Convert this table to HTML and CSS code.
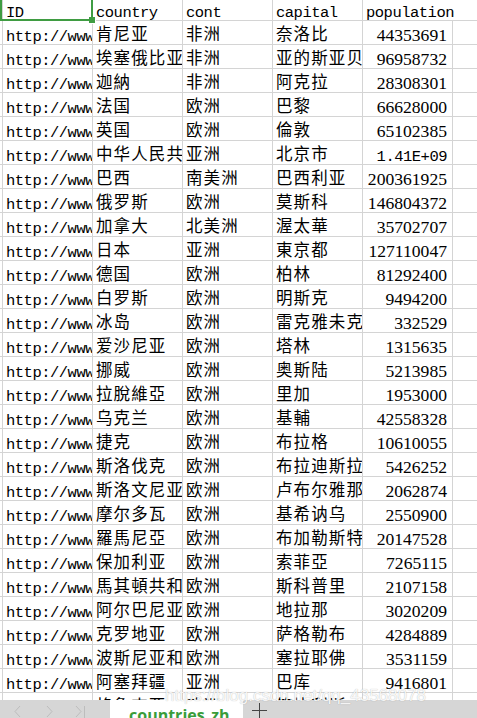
FILE: index.html
```html
<!DOCTYPE html>
<html lang="zh">
<head>
<meta charset="utf-8">
<title>countries_zh</title>
<link rel="stylesheet" href="styles.css">
</head>
<body>
<div class="app">
  <div class="sheet">
    <div class="row head">
      <div class="cell edge"></div>
      <div class="cell l sel">ID<span class="selbox"></span><span class="handle"></span></div>
      <div class="cell l">country</div>
      <div class="cell l">cont</div>
      <div class="cell l">capital</div>
      <div class="cell l spill">population</div>
      <div class="cell last"></div>
    </div>
    <div class="row"><div class="cell edge"></div><div class="cell l">http://www</div><div class="cell c">肯尼亚</div><div class="cell c">非洲</div><div class="cell c">奈洛比</div><div class="cell n">44353691</div><div class="cell last"></div></div>
    <div class="row"><div class="cell edge"></div><div class="cell l">http://www</div><div class="cell c">埃塞俄比亚</div><div class="cell c">非洲</div><div class="cell c">亚的斯亚贝巴</div><div class="cell n">96958732</div><div class="cell last"></div></div>
    <div class="row"><div class="cell edge"></div><div class="cell l">http://www</div><div class="cell c">迦納</div><div class="cell c">非洲</div><div class="cell c">阿克拉</div><div class="cell n">28308301</div><div class="cell last"></div></div>
    <div class="row"><div class="cell edge"></div><div class="cell l">http://www</div><div class="cell c">法国</div><div class="cell c">欧洲</div><div class="cell c">巴黎</div><div class="cell n">66628000</div><div class="cell last"></div></div>
    <div class="row"><div class="cell edge"></div><div class="cell l">http://www</div><div class="cell c">英国</div><div class="cell c">欧洲</div><div class="cell c">倫敦</div><div class="cell n">65102385</div><div class="cell last"></div></div>
    <div class="row"><div class="cell edge"></div><div class="cell l">http://www</div><div class="cell c">中华人民共和国</div><div class="cell c">亚洲</div><div class="cell c">北京市</div><div class="cell n m">1.41E+09</div><div class="cell last"></div></div>
    <div class="row"><div class="cell edge"></div><div class="cell l">http://www</div><div class="cell c">巴西</div><div class="cell c">南美洲</div><div class="cell c">巴西利亚</div><div class="cell n">200361925</div><div class="cell last"></div></div>
    <div class="row"><div class="cell edge"></div><div class="cell l">http://www</div><div class="cell c">俄罗斯</div><div class="cell c">欧洲</div><div class="cell c">莫斯科</div><div class="cell n">146804372</div><div class="cell last"></div></div>
    <div class="row"><div class="cell edge"></div><div class="cell l">http://www</div><div class="cell c">加拿大</div><div class="cell c">北美洲</div><div class="cell c">渥太華</div><div class="cell n">35702707</div><div class="cell last"></div></div>
    <div class="row"><div class="cell edge"></div><div class="cell l">http://www</div><div class="cell c">日本</div><div class="cell c">亚洲</div><div class="cell c">東京都</div><div class="cell n">127110047</div><div class="cell last"></div></div>
    <div class="row"><div class="cell edge"></div><div class="cell l">http://www</div><div class="cell c">德国</div><div class="cell c">欧洲</div><div class="cell c">柏林</div><div class="cell n">81292400</div><div class="cell last"></div></div>
    <div class="row"><div class="cell edge"></div><div class="cell l">http://www</div><div class="cell c">白罗斯</div><div class="cell c">欧洲</div><div class="cell c">明斯克</div><div class="cell n">9494200</div><div class="cell last"></div></div>
    <div class="row"><div class="cell edge"></div><div class="cell l">http://www</div><div class="cell c">冰岛</div><div class="cell c">欧洲</div><div class="cell c">雷克雅未克</div><div class="cell n">332529</div><div class="cell last"></div></div>
    <div class="row"><div class="cell edge"></div><div class="cell l">http://www</div><div class="cell c">爱沙尼亚</div><div class="cell c">欧洲</div><div class="cell c">塔林</div><div class="cell n">1315635</div><div class="cell last"></div></div>
    <div class="row"><div class="cell edge"></div><div class="cell l">http://www</div><div class="cell c">挪威</div><div class="cell c">欧洲</div><div class="cell c">奥斯陆</div><div class="cell n">5213985</div><div class="cell last"></div></div>
    <div class="row"><div class="cell edge"></div><div class="cell l">http://www</div><div class="cell c">拉脫維亞</div><div class="cell c">欧洲</div><div class="cell c">里加</div><div class="cell n">1953000</div><div class="cell last"></div></div>
    <div class="row"><div class="cell edge"></div><div class="cell l">http://www</div><div class="cell c">乌克兰</div><div class="cell c">欧洲</div><div class="cell c">基輔</div><div class="cell n">42558328</div><div class="cell last"></div></div>
    <div class="row"><div class="cell edge"></div><div class="cell l">http://www</div><div class="cell c">捷克</div><div class="cell c">欧洲</div><div class="cell c">布拉格</div><div class="cell n">10610055</div><div class="cell last"></div></div>
    <div class="row"><div class="cell edge"></div><div class="cell l">http://www</div><div class="cell c">斯洛伐克</div><div class="cell c">欧洲</div><div class="cell c">布拉迪斯拉发</div><div class="cell n">5426252</div><div class="cell last"></div></div>
    <div class="row"><div class="cell edge"></div><div class="cell l">http://www</div><div class="cell c">斯洛文尼亚</div><div class="cell c">欧洲</div><div class="cell c">卢布尔雅那</div><div class="cell n">2062874</div><div class="cell last"></div></div>
    <div class="row"><div class="cell edge"></div><div class="cell l">http://www</div><div class="cell c">摩尔多瓦</div><div class="cell c">欧洲</div><div class="cell c">基希讷乌</div><div class="cell n">2550900</div><div class="cell last"></div></div>
    <div class="row"><div class="cell edge"></div><div class="cell l">http://www</div><div class="cell c">羅馬尼亞</div><div class="cell c">欧洲</div><div class="cell c">布加勒斯特</div><div class="cell n">20147528</div><div class="cell last"></div></div>
    <div class="row"><div class="cell edge"></div><div class="cell l">http://www</div><div class="cell c">保加利亚</div><div class="cell c">欧洲</div><div class="cell c">索菲亞</div><div class="cell n">7265115</div><div class="cell last"></div></div>
    <div class="row"><div class="cell edge"></div><div class="cell l">http://www</div><div class="cell c">馬其頓共和国</div><div class="cell c">欧洲</div><div class="cell c">斯科普里</div><div class="cell n">2107158</div><div class="cell last"></div></div>
    <div class="row"><div class="cell edge"></div><div class="cell l">http://www</div><div class="cell c">阿尔巴尼亚</div><div class="cell c">欧洲</div><div class="cell c">地拉那</div><div class="cell n">3020209</div><div class="cell last"></div></div>
    <div class="row"><div class="cell edge"></div><div class="cell l">http://www</div><div class="cell c">克罗地亚</div><div class="cell c">欧洲</div><div class="cell c">萨格勒布</div><div class="cell n">4284889</div><div class="cell last"></div></div>
    <div class="row"><div class="cell edge"></div><div class="cell l">http://www</div><div class="cell c">波斯尼亚和黑塞哥维那</div><div class="cell c">欧洲</div><div class="cell c">塞拉耶佛</div><div class="cell n">3531159</div><div class="cell last"></div></div>
    <div class="row"><div class="cell edge"></div><div class="cell l">http://www</div><div class="cell c">阿塞拜疆</div><div class="cell c">亚洲</div><div class="cell c">巴库</div><div class="cell n">9416801</div><div class="cell last"></div></div>
    <div class="row"><div class="cell edge"></div><div class="cell l">http://www</div><div class="cell c">格鲁吉亚</div><div class="cell c">欧洲</div><div class="cell c">第比利斯</div><div class="cell n">3729500</div><div class="cell last"></div></div>
  </div>
  <div class="tabbar">
    <div class="nav">
      <svg class="nav-icon" width="110" height="18" viewBox="0 0 110 18">
        <polyline points="20,6 15,11.5 20,17" fill="none" stroke="#bdbdbd" stroke-width="1"/>
        <polyline points="47,6 52,11.5 47,17" fill="none" stroke="#bdbdbd" stroke-width="1"/>
        <polyline points="76,6 81,11.5 76,17" fill="none" stroke="#bdbdbd" stroke-width="1"/>
        <line x1="84.5" y1="6" x2="84.5" y2="18" stroke="#bdbdbd" stroke-width="1"/>
      </svg>
    </div>
    <div class="tab">countries_zh</div>
    <div class="rest">
      <svg class="plus" width="16" height="16" viewBox="0 0 16 16">
        <line x1="8.5" y1="1" x2="8.5" y2="16" stroke="#444" stroke-width="1"/>
        <line x1="1" y1="8.5" x2="16" y2="8.5" stroke="#444" stroke-width="1"/>
      </svg>
    </div>
  </div>
  <div class="watermark">https://blog.csdn.net/qq_43568078</div>
</div>
</body>
</html>
```
FILE: styles.css
```css
html, body {
  margin: 0;
  padding: 0;
  background: #fff;
}
body {
  width: 477px;
  height: 718px;
  overflow: hidden;
}
.app {
  position: relative;
  width: 477px;
  height: 718px;
  display: flex;
  flex-direction: column;
  overflow: hidden;
}
.sheet {
  height: 700px;
  overflow: hidden;
  flex: none;
}
.row {
  display: grid;
  grid-template-columns: 3px 90px 90px 90px 90px 90px 1fr;
  height: 24px;
  box-sizing: border-box;
  border-bottom: 1px solid #d4d4d4;
}
.row.head {
  height: 21px;
}
.cell {
  position: relative;
  height: 23px;
  box-sizing: border-box;
  border-right: 1px solid #d4d4d4;
  overflow: hidden;
  white-space: nowrap;
  color: #000;
  padding: 0 3px;
  line-height: 16px;
}
.head .cell {
  height: 20px;
}
.cell.edge {
  padding: 0;
}
.cell.last {
  border-right: none;
}
.cell.spill {
  overflow: visible;
  border-right-color: transparent;
}
.cell.l {
  font-family: "Liberation Mono", monospace;
  font-size: 15.5px;
  letter-spacing: -0.5px;
  padding-top: 8px;
}
.head .cell.l {
  padding-top: 5px;
}
.cell.c {
  font-family: "Noto Sans CJK SC", sans-serif;
  font-size: 16.5px;
  letter-spacing: 1.1px;
  padding-top: 4px;
}
.cell.n {
  font-family: "Liberation Serif", serif;
  font-size: 17.6px;
  text-align: right;
  padding-top: 6px;
  padding-right: 5px;
}
.cell.n.m {
  font-family: "Liberation Mono", monospace;
  font-size: 15.5px;
  letter-spacing: -0.5px;
  padding-top: 8px;
}
.cell.sel {
  overflow: visible;
}
.selbox {
  position: absolute;
  left: -3px;
  top: -4px;
  width: 93px;
  height: 25px;
  box-sizing: border-box;
  border: 2px solid #3f9c42;
  pointer-events: none;
}
.handle {
  position: absolute;
  left: 86px;
  top: 17px;
  width: 6px;
  height: 6px;
  background: #3f9c42;
  border: 1px solid #fff;
  border-left-width: 0;
  border-top-width: 0;
  z-index: 2;
}
.tabbar {
  flex: none;
  height: 18px;
  display: flex;
  background: #d6d6d6;
}
.nav {
  width: 110px;
  height: 18px;
}
.nav-icon {
  display: block;
}
.tab {
  width: 133px;
  height: 18px;
  background: #fff;
  color: #3a9c3a;
  font-family: "Open Sans", sans-serif;
  font-weight: 700;
  font-size: 16px;
  line-height: 18px;
  padding-left: 19px;
  box-sizing: border-box;
  padding-top: 6px;
  overflow: hidden;
  white-space: nowrap;
}
.rest {
  flex: 1;
  height: 18px;
}
.plus {
  display: block;
  margin: 2px 0 0 8px;
}
.watermark {
  position: absolute;
  left: 165px;
  top: 686px;
  font-family: "Liberation Sans", sans-serif;
  font-size: 17px;
  color: rgba(255, 255, 255, 0.9);
  text-shadow: 0 0 1px rgba(0, 0, 0, 0.3);
  white-space: nowrap;
  pointer-events: none;
}
```
